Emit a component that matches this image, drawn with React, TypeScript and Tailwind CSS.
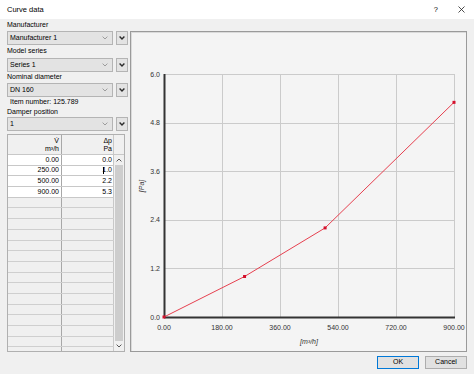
import React from "react";

const Chev = ({ bold }: { bold?: boolean }) => (
  <svg width="6" height="4" viewBox="0 0 6 4">
    <path
      d="M0.6 0.6 L3 3 L5.4 0.6"
      stroke={bold ? "#2b2b2b" : "#8a8a8a"}
      strokeWidth={bold ? 1.4 : 0.8}
      fill="none"
    />
  </svg>
);

const Combo = ({ text }: { text: string }) => (
  <div className="flex items-center gap-[3px]">
    <div className="w-[106px] h-[14px] bg-[#e3e3e3] border border-[#b4b4b4] flex items-center justify-between pl-[2px] pr-[4px]">
      <span>{text}</span>
      <Chev />
    </div>
    <div className="w-[12px] h-[14px] bg-[#e3e3e3] border border-[#b4b4b4] flex items-center justify-center">
      <Chev bold />
    </div>
  </div>
);

const data = [
  { v: 0, p: 0 },
  { v: 250, p: 1.0 },
  { v: 500, p: 2.2 },
  { v: 900, p: 5.3 },
];

const Chart = () => {
  const x0 = 33,
    x1 = 323,
    yT = 42,
    yB = 285;
  const px = (v: number) => x0 + (v / 900) * (x1 - x0);
  const py = (p: number) => yB - (p / 6) * (yB - yT);
  const xt = [0, 180, 360, 540, 720, 900];
  const yt = [0, 1.2, 2.4, 3.6, 4.8, 6.0];
  const pts = data.map((d) => `${px(d.v)},${py(d.p)}`).join(" ");
  return (
    <svg width="335" height="319" viewBox="0 0 335 319" className="block">
      {xt.map((t) => (
        <line key={"gx" + t} x1={Math.round(px(t)) + 0.5} x2={Math.round(px(t)) + 0.5} y1={yT} y2={yB} stroke="#cbcbcb" strokeWidth="1" />
      ))}
      {yt.map((t) => (
        <line key={"gy" + t} x1={x0} x2={x1} y1={Math.round(py(t)) + 0.5} y2={Math.round(py(t)) + 0.5} stroke="#cbcbcb" strokeWidth="1" />
      ))}
      <line x1={x0 + 0.5} x2={x0 + 0.5} y1={yT} y2={yB + 1} stroke="#333" strokeWidth="2" />
      <line x1={x0} x2={x1 + 1} y1={yB + 0.5} y2={yB + 0.5} stroke="#333" strokeWidth="2" />
      {yt.map((t) => (
        <text key={"ly" + t} x={x0 - 4} y={py(t) + 2.5} fontSize="7" textAnchor="end" fill="#333" fontFamily="Liberation Sans, sans-serif">
          {t.toFixed(1)}
        </text>
      ))}
      {xt.map((t) => (
        <text key={"lx" + t} x={px(t)} y={yB + 13} fontSize="7" textAnchor="middle" fill="#333" fontFamily="Liberation Sans, sans-serif">
          {t.toFixed(2)}
        </text>
      ))}
      <text x="0" y="0" fontSize="7" fontStyle="italic" fill="#333" textAnchor="middle" fontFamily="Liberation Sans, sans-serif" transform="translate(13,154) rotate(-90)">
        [Pa]
      </text>
      <text x="178" y="312" fontSize="7" fontStyle="italic" fill="#333" textAnchor="middle" fontFamily="Liberation Sans, sans-serif">
        [m³/h]
      </text>
      <polyline points={pts} fill="none" stroke="#e6404f" strokeWidth="1" />
      {data.map((d) => (
        <rect key={d.v} x={px(d.v) - 1.5} y={py(d.p) - 1.5} width="3" height="3" fill="#d4102c" />
      ))}
    </svg>
  );
};

export default function App() {
  const empty = Array.from({ length: 15 });
  return (
    <div
      className="w-[474px] h-[374px] bg-[#f0f0f0] flex flex-col text-[7px] text-black overflow-hidden"
      style={{ fontFamily: '"Liberation Sans", Arial, sans-serif' }}
    >
      {/* title bar */}
      <div className="h-[19px] bg-white flex items-center pl-[7px] pr-[9px] shrink-0">
        <span className="text-[7.5px]">Curve data</span>
        <div className="flex-1" />
        <span className="text-[7.5px] mr-[20px]">?</span>
        <svg width="7" height="7" viewBox="0 0 7 7">
          <path d="M0.5 0.5 L6.5 6.5 M6.5 0.5 L0.5 6.5" stroke="#222" strokeWidth="0.8" />
        </svg>
      </div>

      {/* main */}
      <div className="flex pl-[7px] h-[333px] shrink-0">
        <div className="w-[121px] flex flex-col">
          <div className="h-[12px] flex items-center">Manufacturer</div>
          <Combo text="Manufacturer 1" />
          <div className="h-[13px] flex items-center">Model series</div>
          <Combo text="Series 1" />
          <div className="h-[11px] flex items-center">Nominal diameter</div>
          <Combo text="DN 160" />
          <div className="h-[10px] flex items-center pl-[3px]">Item number: 125.789</div>
          <div className="h-[10px] flex items-center">Damper position</div>
          <Combo text="1" />

          {/* table */}
          <div className="mt-[3px] w-[118px] h-[218px] border border-[#b0b0b0] bg-[#f0f0f0] flex flex-col overflow-hidden">
            <div className="h-[20px] flex shrink-0 border-b border-[#c8c8c8]">
              <div className="w-[54px] border-r border-[#a8a8a8] flex flex-col items-end justify-center pr-[2px] leading-[8px]">
                <span>V̇</span>
                <span>m³/h</span>
              </div>
              <div className="w-[52px] border-r border-[#c8c8c8] flex flex-col items-end justify-center pr-[1px] leading-[8px]">
                <span>Δp</span>
                <span>Pa</span>
              </div>
              <div className="flex-1" />
            </div>
            <div className="flex flex-1 overflow-hidden">
              <div className="w-[106px] flex flex-col">
                {data.map((d, i) => (
                  <div key={d.v} className="h-[10.7px] shrink-0 flex bg-white border-b border-[#c8c8c8]">
                    <div className="w-[54px] border-r border-[#a8a8a8] flex items-center justify-end pr-[2px]">
                      {d.v.toFixed(2)}
                    </div>
                    <div className="w-[52px] border-r border-[#c8c8c8] flex items-center justify-end pr-[1px]">
                      {i === 1 ? (
                        <span className="flex items-center">
                          <span className="w-[1px] h-[7px] bg-black -mr-[2px]" />
                          1.0
                        </span>
                      ) : (
                        d.p.toFixed(1)
                      )}
                    </div>
                  </div>
                ))}
                {empty.map((_, i) => (
                  <div key={i} className="h-[10.7px] shrink-0 flex border-b border-[#cfcfcf]">
                    <div className="w-[54px] border-r border-[#a8a8a8]" />
                    <div className="w-[52px] border-r border-[#c8c8c8]" />
                  </div>
                ))}
              </div>
              <div className="flex-1 flex flex-col items-stretch">
                <div className="h-[10px] flex items-center justify-center">
                  <svg width="6" height="4" viewBox="0 0 6 4">
                    <path d="M0.6 3.4 L3 1 L5.4 3.4" stroke="#444" strokeWidth="0.9" fill="none" />
                  </svg>
                </div>
                <div className="flex-1 mx-[1px] bg-[#cdcdcd]" />
                <div className="h-[10px] flex items-center justify-center">
                  <svg width="6" height="4" viewBox="0 0 6 4">
                    <path d="M0.6 0.6 L3 3 L5.4 0.6" stroke="#444" strokeWidth="0.9" fill="none" />
                  </svg>
                </div>
              </div>
            </div>
          </div>
        </div>

        {/* chart panel */}
        <div className="ml-[2px] mt-[12px] w-[337px] h-[321px] border border-[#9a9a9a] bg-[#f4f4f4] shadow-[inset_1px_1px_0_#dadada]">
          <Chart />
        </div>
      </div>

      {/* footer */}
      <div className="flex justify-end gap-[6px] pr-[7px] pt-[4px]">
        <div className="w-[42px] h-[13px] bg-[#e1e1e1] border border-[#0078d7] flex items-center justify-center">OK</div>
        <div className="w-[42px] h-[13px] bg-[#e1e1e1] border border-[#adadad] flex items-center justify-center">Cancel</div>
      </div>
    </div>
  );
}
